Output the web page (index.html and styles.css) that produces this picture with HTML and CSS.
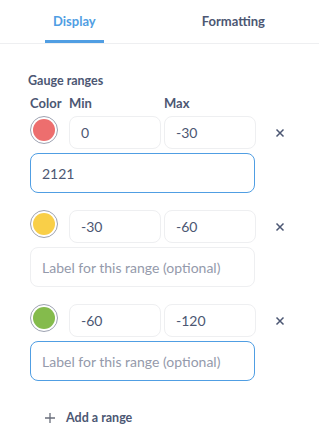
FILE: index.html
```html
<!DOCTYPE html>
<html lang="en">
<head>
	<meta charset="UTF-8">
	<meta name="viewport" content="width=device-width, initial-scale=1.0">
	<title>Gauge ranges</title>
	<link rel="stylesheet" href="styles.css">
</head>
<body>
	<div class="tabs">
		<div class="tab tab-active">Display</div>
		<div class="tab">Formatting</div>
	</div>

	<div class="panel">
		<div class="section-title">Gauge ranges</div>

		<div class="range-head">
			<div class="col-color">Color</div>
			<div class="col-num">Min</div>
			<div class="col-num">Max</div>
		</div>

		<div class="range">
			<div class="range-line">
				<div class="swatch"><span class="swatch-fill red"></span></div>
				<div class="field num">0</div>
				<div class="field num">-30</div>
				<div class="remove">
					<svg width="10" height="10" viewBox="0 0 10 10"><path d="M1.5 1.5 L8.5 8.5 M8.5 1.5 L1.5 8.5" stroke="#4c5773" stroke-width="1.5" fill="none"/></svg>
				</div>
			</div>
			<div class="field label focused">2121</div>
		</div>

		<div class="range">
			<div class="range-line">
				<div class="swatch"><span class="swatch-fill yellow"></span></div>
				<div class="field num">-30</div>
				<div class="field num">-60</div>
				<div class="remove">
					<svg width="10" height="10" viewBox="0 0 10 10"><path d="M1.5 1.5 L8.5 8.5 M8.5 1.5 L1.5 8.5" stroke="#4c5773" stroke-width="1.5" fill="none"/></svg>
				</div>
			</div>
			<div class="field label placeholder">Label for this range (optional)</div>
		</div>

		<div class="range">
			<div class="range-line">
				<div class="swatch"><span class="swatch-fill green"></span></div>
				<div class="field num">-60</div>
				<div class="field num">-120</div>
				<div class="remove">
					<svg width="10" height="10" viewBox="0 0 10 10"><path d="M1.5 1.5 L8.5 8.5 M8.5 1.5 L1.5 8.5" stroke="#4c5773" stroke-width="1.5" fill="none"/></svg>
				</div>
			</div>
			<div class="field label placeholder focused">Label for this range (optional)</div>
		</div>

		<div class="add-range">
			<svg width="12" height="12" viewBox="0 0 12 12"><path d="M6 1 V11 M1 6 H11" stroke="#696e7b" stroke-width="1.3" fill="none"/></svg>
			<span>Add a range</span>
		</div>
	</div>
</body>
</html>
```

FILE: styles.css
```css
html, body {
	padding: 0;
	margin: 0;
}

body {
	font-family: Lato, "Noto Sans", sans-serif;
	color: #4c5773;
	background: #fff;
}

/*/ Tabs /*/

.tabs {
	display: flex;
	gap: 90px;
	padding-left: 45px;
	border-bottom: 1px solid #eeeff1;
	height: 43px;
}

.tab {
	font-size: 13px;
	font-weight: 700;
	padding: 13px 8px 0;
	box-sizing: border-box;
	color: #4c5773;
}

.tab-active {
	color: #509ee3;
	border-bottom: 3px solid #509ee3;
}

/*/ Panel /*/

.panel {
	padding: 29px 0 0 30px;
}

.section-title {
	font-size: 12.5px;
	font-weight: 700;
	margin-left: -2px;
	line-height: 16px;
}

.range-head {
	display: flex;
	font-size: 13px;
	font-weight: 700;
	line-height: 16px;
	margin-top: 6px;
	margin-bottom: 5px;
}

.col-color {
	width: 39px;
}

.col-num {
	width: 95px;
}

.range {
	margin-bottom: 17px;
}

.range-line {
	display: flex;
	align-items: flex-start;
	gap: 3px;
	margin-bottom: 4px;
}

.swatch {
	width: 28px;
	height: 28px;
	box-sizing: border-box;
	border: 1px solid #9ea3b2;
	border-radius: 50%;
	padding: 2px;
	margin-right: 8px;
}

.swatch-fill {
	display: block;
	width: 100%;
	height: 100%;
	border-radius: 50%;
}

.red { background: #ed6e6e; }
.yellow { background: #f9cf48; }
.green { background: #84bb4c; }

.field {
	box-sizing: border-box;
	border: 1px solid #eeeff1;
	border-radius: 8px;
	font-size: 14px;
	display: flex;
	align-items: center;
	padding-left: 11px;
	color: #4c5773;
}

.field.num {
	width: 92px;
	height: 33px;
}

.field.label {
	width: 225px;
	height: 40px;
}

.field.focused {
	border-color: #509ee3;
}

.field.placeholder {
	color: #949aab;
}

.remove {
	width: 42px;
	height: 33px;
	display: flex;
	align-items: center;
	justify-content: center;
}

.add-range {
	display: flex;
	align-items: center;
	gap: 10px;
	margin: 29px 0 0 14px;
	font-size: 12.5px;
	font-weight: 700;
	color: #4c5773;
}
```
